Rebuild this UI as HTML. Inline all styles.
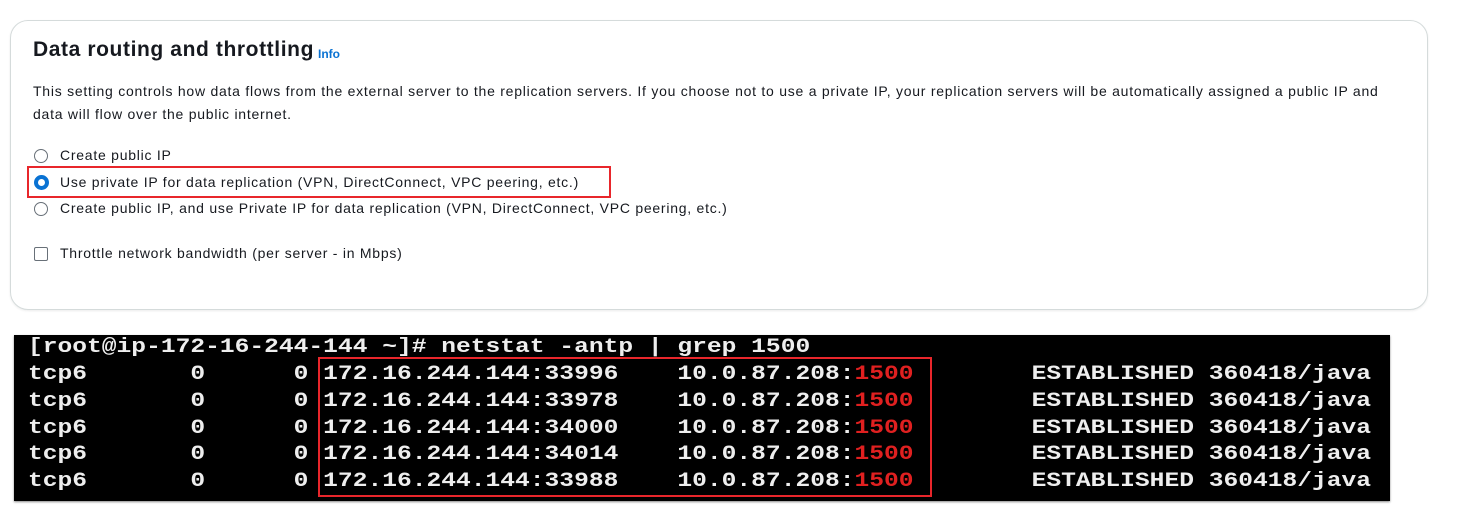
<!DOCTYPE html>
<html><head><style>
body{margin:0;width:1458px;height:521px;background:#fff;position:relative;overflow:hidden;font-family:"Liberation Sans",sans-serif;color:#16191f}
.card{position:absolute;left:10px;top:20px;width:1416px;height:288px;border:1px solid #d5dbdb;border-radius:18px;box-shadow:0 1px 2px rgba(0,0,0,.08)}
.t{position:absolute;white-space:nowrap}
.p{font-size:14px;letter-spacing:0.75px}
.radio{position:absolute;left:34px;width:12px;height:12px;border:1.5px solid #687078;border-radius:50%}
.sel{border:4px solid #0972d3;width:7px;height:7px}
.chk{position:absolute;left:34px;width:12px;height:12px;border:1.5px solid #687078;border-radius:2px}
.term{position:absolute;left:14px;top:335px;width:1376px;height:166px;background:#000;box-shadow:0 1px 2px #888}
.ln{position:absolute;left:28px;font-family:"Liberation Mono",monospace;font-weight:bold;font-size:24.6px;color:#eee;white-space:pre;line-height:26px;transform:scaleY(0.82);transform-origin:left center}
.r{color:#e02020}
.box{position:absolute;border:2px solid #e8262b}
</style></head><body>
<div class="card"></div>
<div class="t" style="left:33px;top:38px;font-size:21px;font-weight:bold;letter-spacing:0.6px">Data routing and throttling</div>
<div class="t" style="left:318px;top:47px;font-size:12px;font-weight:bold;color:#0972d3">Info</div>
<div class="t p" style="left:33px;top:80px;line-height:23px">This setting controls how data flows from the external server to the replication servers. If you choose not to use a private IP, your replication servers will be automatically assigned a public IP and<br>data will flow over the public internet.</div>
<div class="radio" style="top:149px"></div>
<div class="t p" style="left:60px;top:147px">Create public IP</div>
<div class="radio sel" style="top:175px"></div>
<div class="t p" style="left:60px;top:174px">Use private IP for data replication (VPN, DirectConnect, VPC peering, etc.)</div>
<div class="radio" style="top:202px"></div>
<div class="t p" style="left:60px;top:200px">Create public IP, and use Private IP for data replication (VPN, DirectConnect, VPC peering, etc.)</div>
<div class="chk" style="top:247px"></div>
<div class="t p" style="left:60px;top:245px">Throttle network bandwidth (per server - in Mbps)</div>
<div class="box" style="left:27px;top:166px;width:580px;height:28px"></div>
<div class="term"></div>
<div class="ln" style="top:335px">[root@ip-172-16-244-144 ~]# netstat -antp | grep 1500</div>
<div class="ln" style="top:362px">tcp6       0      0 172.16.244.144:33996    10.0.87.208:<span class="r">1500</span>        ESTABLISHED 360418/java</div>
<div class="ln" style="top:389px">tcp6       0      0 172.16.244.144:33978    10.0.87.208:<span class="r">1500</span>        ESTABLISHED 360418/java</div>
<div class="ln" style="top:416px">tcp6       0      0 172.16.244.144:34000    10.0.87.208:<span class="r">1500</span>        ESTABLISHED 360418/java</div>
<div class="ln" style="top:442px">tcp6       0      0 172.16.244.144:34014    10.0.87.208:<span class="r">1500</span>        ESTABLISHED 360418/java</div>
<div class="ln" style="top:469px">tcp6       0      0 172.16.244.144:33988    10.0.87.208:<span class="r">1500</span>        ESTABLISHED 360418/java</div>
<div class="box" style="left:318px;top:357px;width:610px;height:136px"></div>
</body></html>
